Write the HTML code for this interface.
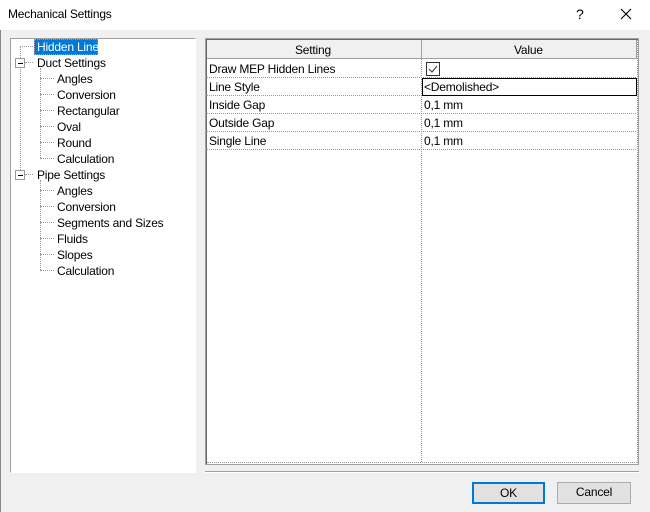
<!DOCTYPE html>
<html><head><style>
body{margin:0;width:650px;height:512px;background:#f0f0f0;font-family:"Liberation Sans",sans-serif;font-size:12px;letter-spacing:-0.2px;position:relative;overflow:hidden;color:#000}
.a{position:absolute}
.tb{left:0;top:0;width:650px;height:30px;background:#fff}
.t{white-space:nowrap}
.dh{border-top:1px dotted #999;height:0}
.dv{border-left:1px dotted #999;width:0}
.pm{width:8px;height:8px;border:1px solid #999;background:#fff}
.pm:after{content:"";position:absolute;left:2px;top:4px;width:5px;height:1px;background:#000}
.row{left:206px;width:430px;height:18px;border-bottom:1px dotted #999}
.btn{background:#e1e1e1;border:1px solid #adadad;text-align:center;line-height:18px}
</style></head><body>
<div class="a" style="left:0;top:0;width:1px;height:512px;background:#888"></div>
<div class="a tb"></div>
<div class="a t" style="left:8px;top:7px;font-size:12px">Mechanical Settings</div>
<div class="a t" style="left:576px;top:6px;font-size:14px">?</div>
<svg class="a" style="left:620px;top:8px" width="12" height="12"><path d="M1 1L11 11M11 1L1 11" stroke="#000" stroke-width="1.2"/></svg>

<!-- tree -->
<div class="a" style="left:10px;top:38px;width:184px;height:433px;background:#fff;border:1px solid #a0a0a0;border-right-color:#fff;border-bottom-color:#fff"></div>
<div class="a dv" style="left:20px;top:46px;height:128px"></div>
<div class="a dh" style="left:20px;top:46px;width:13px"></div>
<div class="a" style="left:34px;top:39px;width:62px;height:14px;background:#0078d7;border:1px dotted #99c"></div>
<div class="a t" style="left:37px;top:40px;color:#fff">Hidden Line</div>
<div class="a pm" style="left:15px;top:58px"></div>
<div class="a dh" style="left:25px;top:62px;width:8px"></div>
<div class="a t" style="left:37px;top:56px">Duct Settings</div>
<div class="a dv" style="left:40px;top:68px;height:90px"></div>
<div class="a pm" style="left:15px;top:170px"></div>
<div class="a dh" style="left:25px;top:174px;width:8px"></div>
<div class="a t" style="left:37px;top:168px">Pipe Settings</div>
<div class="a dv" style="left:40px;top:180px;height:90px"></div>
<div class="a dh" style="left:40px;top:78px;width:14px"></div><div class="a t" style="left:57px;top:72px">Angles</div>
<div class="a dh" style="left:40px;top:94px;width:14px"></div><div class="a t" style="left:57px;top:88px">Conversion</div>
<div class="a dh" style="left:40px;top:110px;width:14px"></div><div class="a t" style="left:57px;top:104px">Rectangular</div>
<div class="a dh" style="left:40px;top:126px;width:14px"></div><div class="a t" style="left:57px;top:120px">Oval</div>
<div class="a dh" style="left:40px;top:142px;width:14px"></div><div class="a t" style="left:57px;top:136px">Round</div>
<div class="a dh" style="left:40px;top:158px;width:14px"></div><div class="a t" style="left:57px;top:152px">Calculation</div>
<div class="a dh" style="left:40px;top:190px;width:14px"></div><div class="a t" style="left:57px;top:184px">Angles</div>
<div class="a dh" style="left:40px;top:206px;width:14px"></div><div class="a t" style="left:57px;top:200px">Conversion</div>
<div class="a dh" style="left:40px;top:222px;width:14px"></div><div class="a t" style="left:57px;top:216px">Segments and Sizes</div>
<div class="a dh" style="left:40px;top:238px;width:14px"></div><div class="a t" style="left:57px;top:232px">Fluids</div>
<div class="a dh" style="left:40px;top:254px;width:14px"></div><div class="a t" style="left:57px;top:248px">Slopes</div>
<div class="a dh" style="left:40px;top:270px;width:14px"></div><div class="a t" style="left:57px;top:264px">Calculation</div>

<!-- grid -->
<div class="a" style="left:205px;top:38px;width:432px;height:425px;background:#fff;border:1px solid #a0a0a0;box-shadow:inset 1px 1px 0 #696969"></div>
<div class="a" style="left:207px;top:40px;width:430px;height:18px;background:#f0f0f0;border-bottom:1px solid #a0a0a0"></div>
<div class="a" style="left:421px;top:40px;width:1px;height:18px;background:#a0a0a0"></div>
<div class="a" style="left:636px;top:40px;width:1px;height:18px;background:#a0a0a0"></div>
<div class="a t" style="left:295px;top:43px">Setting</div>
<div class="a t" style="left:514px;top:43px">Value</div>
<div class="a dv" style="left:421px;top:59px;height:403px"></div>
<div class="a dv" style="left:637px;top:40px;height:423px"></div>
<div class="a dh" style="left:207px;top:462px;width:430px"></div>
<div class="a row" style="top:59px"></div>
<div class="a row" style="top:77px"></div>
<div class="a row" style="top:95px"></div>
<div class="a row" style="top:113px"></div>
<div class="a row" style="top:131px"></div>
<div class="a t" style="left:209px;top:62px">Draw MEP Hidden Lines</div>
<div class="a" style="left:426px;top:62px;width:12px;height:12px;border:1px solid #333;background:#fff"></div>
<svg class="a" style="left:427px;top:63px" width="12" height="12"><path d="M2 6L5 9L10 3" fill="none" stroke="#333" stroke-width="1"/></svg>
<div class="a t" style="left:209px;top:80px">Line Style</div>
<div class="a" style="left:422px;top:78px;width:213px;height:16px;border:1px solid #000"></div>
<div class="a t" style="left:424px;top:80px">&lt;Demolished&gt;</div>
<div class="a t" style="left:209px;top:98px">Inside Gap</div><div class="a t" style="left:424px;top:98px">0,1 mm</div>
<div class="a t" style="left:209px;top:116px">Outside Gap</div><div class="a t" style="left:424px;top:116px">0,1 mm</div>
<div class="a t" style="left:209px;top:134px">Single Line</div><div class="a t" style="left:424px;top:134px">0,1 mm</div>

<div class="a" style="left:205px;top:471px;width:434px;height:1px;background:#a0a0a0"></div>
<div class="a" style="left:205px;top:472px;width:434px;height:1px;background:#fff"></div>
<div class="a btn" style="left:472px;top:482px;width:69px;height:18px;border:2px solid #0078d7">OK</div>
<div class="a btn" style="left:557px;top:482px;width:72px;height:20px">Cancel</div>
</body></html>
